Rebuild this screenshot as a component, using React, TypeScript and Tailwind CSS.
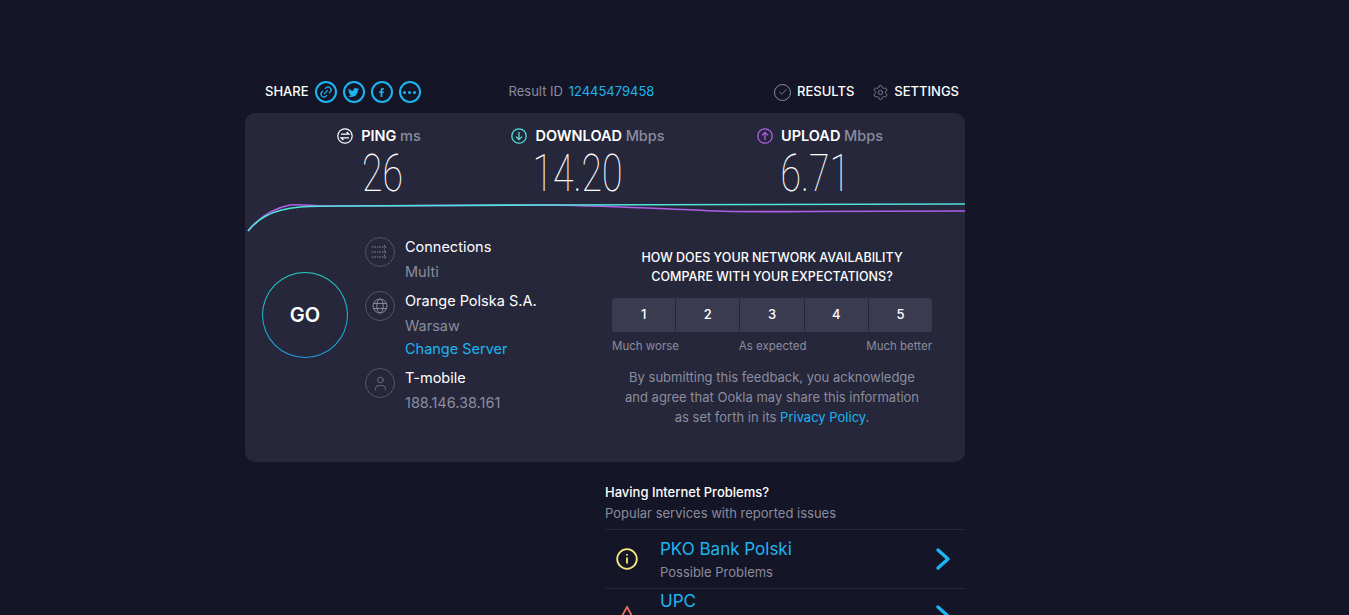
import { Check, Link2, Settings, User } from 'lucide-react';
import { FaFacebookF, FaTwitter } from 'react-icons/fa';

const ui = 'font-["Inter","Open_Sans",sans-serif]';

function ShareIcon({ children }: { children: React.ReactNode }) {
  return (
    <span className="flex h-[22px] w-[22px] items-center justify-center rounded-full border-2 border-[#1cb5f1] text-[#1cb5f1]">
      {children}
    </span>
  );
}

function Stat({ icon, label, unit, value, width, shift }: {
  icon: React.ReactNode;
  label: string;
  unit: string;
  value: string;
  width: string;
  shift: string;
}) {
  return (
    <div className={`flex flex-col items-center ${width}`}>
      <div className="flex h-[20px] items-center gap-[8px] text-[14.5px] font-semibold text-white">
        {icon}
        <span>
          {label} <span className="font-medium text-[#8b8c9e]">{unit}</span>
        </span>
      </div>
      <div className={`mt-[3px] origin-center scale-x-[0.72] font-["Roboto",sans-serif] text-[52px] leading-[50px] font-thin text-white ${shift}`}>
        {value}
      </div>
    </div>
  );
}

function InfoIcon({ children }: { children: React.ReactNode }) {
  return (
    <span className="mt-[3px] flex h-[30px] w-[30px] shrink-0 items-center justify-center rounded-full border border-[#54556a] text-[#85869a]">
      {children}
    </span>
  );
}

function Chevron() {
  return (
    <svg width="16" height="24" viewBox="0 0 16 24" fill="none" stroke="#1cb5f1" strokeWidth="3.4" strokeLinecap="round" strokeLinejoin="round">
      <path d="M3 3 L13 12 L3 21" />
    </svg>
  );
}

export default function App() {
  return (
    <div className={`h-[615px] overflow-hidden bg-[#141526] ${ui}`}>
      <div className="ml-[245px] w-[720px] pt-[71px]">
        {/* top bar */}
        <header className="flex h-[42px] items-center text-[13px] font-medium text-white">
          <div className="ml-[20px] flex items-center gap-[6px]">
            <span className="mr-[0px]">SHARE</span>
            <ShareIcon><Link2 size={14} strokeWidth={2} className="-rotate-45" /></ShareIcon>
            <ShareIcon><FaTwitter size={11} /></ShareIcon>
            <ShareIcon><FaFacebookF size={9} /></ShareIcon>
            <ShareIcon>
              <span className="flex gap-[2px]">
                <i className="h-[3px] w-[3px] rounded-full bg-[#1cb5f1]" />
                <i className="h-[3px] w-[3px] rounded-full bg-[#1cb5f1]" />
                <i className="h-[3px] w-[3px] rounded-full bg-[#1cb5f1]" />
              </span>
            </ShareIcon>
          </div>
          <div className="ml-[88px] text-[13px] font-normal text-[#8b8c9e]">
            Result ID <span className="ml-[2px] text-[#1cb5f1]">12445479458</span>
          </div>
          <div className="ml-auto flex items-center pr-[6px]">
            <span className="mr-[6px] flex h-[17px] w-[17px] items-center justify-center rounded-full border border-[#8b8c9e] text-[#8b8c9e]">
              <Check size={10} />
            </span>
            <span>RESULTS</span>
            <Settings size={17} strokeWidth={1.2} className="mr-[5px] ml-[18px] text-[#8b8c9e]" />
            <span>SETTINGS</span>
          </div>
        </header>

        {/* result panel */}
        <section className="h-[349px] rounded-[10px] bg-[#26273b]">
          <div className="flex pt-[13px] pl-[30px]">
            <Stat
              label="PING"
              unit="ms"
              value="26"
              width="w-[208px]"
              shift="translate-x-[3px]"
              icon={
                <svg width="16" height="16" viewBox="0 0 16 16" fill="none" stroke="#fff" strokeWidth="1.2">
                  <circle cx="8" cy="8" r="7.2" />
                  <path d="M4 6.2h8L9.6 4M12 9.8H4l2.4 2.2" />
                </svg>
              }
            />
            <Stat
              label="DOWNLOAD"
              unit="Mbps"
              value="14.20"
              width="w-[210px]"
              shift="-translate-x-[11px]"
              icon={
                <svg width="16" height="16" viewBox="0 0 16 16" fill="none" stroke="#4fe3dc" strokeWidth="1.3">
                  <circle cx="8" cy="8" r="7.2" />
                  <path d="M8 4v7.5M5 8.6l3 3 3-3" />
                </svg>
              }
            />
            <Stat
              label="UPLOAD"
              unit="Mbps"
              value="6.71"
              width="w-[254px]"
              shift="-translate-x-[5px]"
              icon={
                <svg width="16" height="16" viewBox="0 0 16 16" fill="none" stroke="#b05fe8" strokeWidth="1.3">
                  <circle cx="8" cy="8" r="7.2" />
                  <path d="M8 12V4.5M5 7.4l3-3 3 3" />
                </svg>
              }
            />
          </div>

          <svg width="720" height="36" viewBox="0 0 720 36" fill="none" className="mt-[-1px] block">
            <path d="M3 33 C12 22 24 11 45 7 C58 6 66 8 80 8 L305 7 C360 8 400 10 450 12 C480 14 505 14 560 13.5 L720 13" stroke="#b05fe8" strokeWidth="1.6" />
            <path d="M3 33 C12 22 24 12 55 9 C70 8 80 8 100 8 L290 7 L720 6" stroke="#4fe3dc" strokeWidth="1.6" />
          </svg>

          <div className="flex">
            <div className="ml-[17px] mt-[38px] h-[86px] w-[86px] shrink-0 rounded-full bg-gradient-to-b from-[#26d0c4] to-[#1c9fe0] p-px">
              <div className="flex h-full w-full items-center justify-center rounded-full bg-[#26273b] text-[20px] font-semibold text-white">
                GO
              </div>
            </div>

            <div className="ml-[17px] flex w-[230px] flex-col text-[14.5px] leading-[25px]">
              <div className="flex gap-[10px]">
                <InfoIcon>
                  <svg width="18" height="16" viewBox="0 0 18 16" fill="none" stroke="#85869a" strokeWidth="1">
                    <path d="M1 3h14M13 1l2 2-2 2M1 8h14M13 6l2 2-2 2M1 13h14M13 11l2 2-2 2" strokeDasharray="1.5 1" />
                  </svg>
                </InfoIcon>
                <div>
                  <div className="text-white">Connections</div>
                  <div className="text-[#8b8c9e]">Multi</div>
                </div>
              </div>
              <div className="mt-[4px] flex gap-[10px]">
                <InfoIcon>
                  <svg width="16" height="16" viewBox="0 0 16 16" fill="none" stroke="#85869a" strokeWidth="1">
                    <circle cx="8" cy="8" r="7" />
                    <ellipse cx="8" cy="8" rx="3.2" ry="7" />
                    <path d="M1.5 5.5h13M1.5 10.5h13" />
                  </svg>
                </InfoIcon>
                <div>
                  <div className="text-white">Orange Polska S.A.</div>
                  <div className="text-[#8b8c9e]">Warsaw</div>
                  <div className="leading-[22px] text-[#1cb5f1]">Change Server</div>
                </div>
              </div>
              <div className="mt-[5px] flex gap-[10px]">
                <InfoIcon><User size={17} strokeWidth={1} /></InfoIcon>
                <div>
                  <div className="text-white">T-mobile</div>
                  <div className="text-[#8b8c9e]">188.146.38.161</div>
                </div>
              </div>
            </div>

            <div className="ml-[17px] w-[320px] pt-[14px] text-center">
              <h2 className="text-[12.5px] leading-[19px] font-medium text-white">
                HOW DOES YOUR NETWORK AVAILABILITY
                <br />
                COMPARE WITH YOUR EXPECTATIONS?
              </h2>
              <div className="mt-[12px] flex h-[34px] gap-px overflow-hidden rounded-[3px] text-[13px] font-medium text-white">
                {[1, 2, 3, 4, 5].map(n => (
                  <div key={n} className="flex flex-1 items-center justify-center bg-[#3a3b50]">{n}</div>
                ))}
              </div>
              <div className="mt-[6px] flex justify-between text-[11.5px] leading-[16px] text-[#8b8c9e]">
                <span>Much worse</span>
                <span>As expected</span>
                <span>Much better</span>
              </div>
              <p className="mt-[13px] text-[13px] leading-[20px] text-[#8b8c9e]">
                By submitting this feedback, you acknowledge
                <br />
                and agree that Ookla may share this information
                <br />
                as set forth in its <span className="text-[#1cb5f1]">Privacy Policy</span>.
              </p>
            </div>
          </div>
        </section>

        {/* reported issues */}
        <section className="mt-[21px] ml-[360px] w-[360px]">
          <h3 className="text-[13px] leading-[18px] font-medium text-white">Having Internet Problems?</h3>
          <p className="mt-[3px] text-[13px] leading-[18px] text-[#8b8c9e]">Popular services with reported issues</p>
          <div className="mt-[7px] flex h-[60px] items-center border-y border-[#26273b]">
            <svg width="22" height="22" viewBox="0 0 22 22" fill="none" stroke="#f7e87a" strokeWidth="1.8" className="ml-[11px]">
              <circle cx="11" cy="11" r="9.8" />
              <path d="M11 9.5v6M11 6v1.6" />
            </svg>
            <div className="ml-[22px] flex-1">
              <div className="text-[17px] leading-[24px] text-[#1cb5f1]">PKO Bank Polski</div>
              <div className="mt-[2px] text-[13px] leading-[18px] text-[#8b8c9e]">Possible Problems</div>
            </div>
            <span className="mr-[14px]"><Chevron /></span>
          </div>
          <div className="flex h-[60px] items-start">
            <svg width="24" height="22" viewBox="0 0 24 22" fill="none" stroke="#f0705f" strokeWidth="1.8" className="mt-[16px] ml-[10px]">
              <path d="M12 2 L22 20 H2 Z" />
            </svg>
            <div className="ml-[21px] flex-1 text-[17px] leading-[24px] text-[#1cb5f1]">UPC</div>
            <span className="mt-[15px] mr-[14px]"><Chevron /></span>
          </div>
        </section>
      </div>
    </div>
  );
}
